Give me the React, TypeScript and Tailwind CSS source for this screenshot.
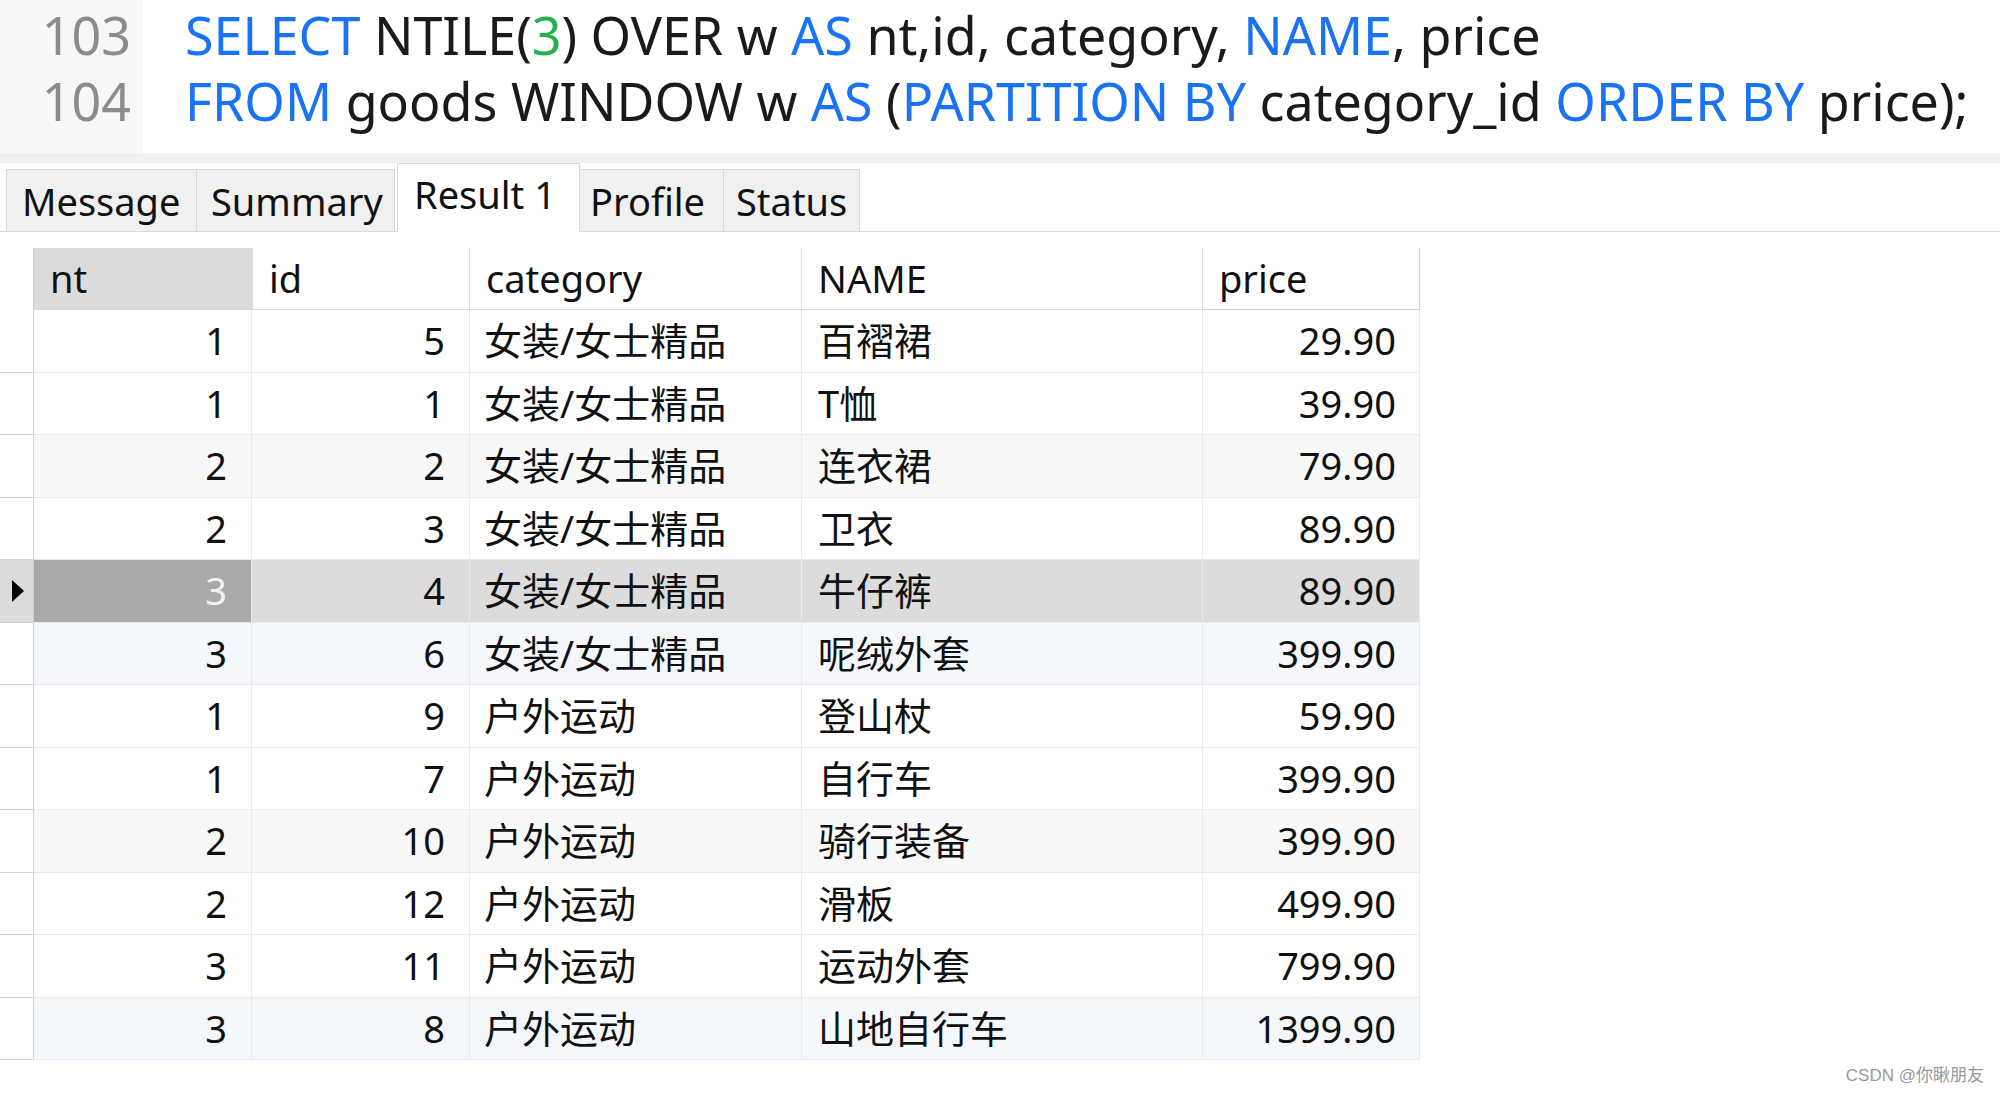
import React from 'react';

const rows: [string, string, string, string, string][] = [
  ['1', '5', '女装/女士精品', '百褶裙', '29.90'],
  ['1', '1', '女装/女士精品', 'T恤', '39.90'],
  ['2', '2', '女装/女士精品', '连衣裙', '79.90'],
  ['2', '3', '女装/女士精品', '卫衣', '89.90'],
  ['3', '4', '女装/女士精品', '牛仔裤', '89.90'],
  ['3', '6', '女装/女士精品', '呢绒外套', '399.90'],
  ['1', '9', '户外运动', '登山杖', '59.90'],
  ['1', '7', '户外运动', '自行车', '399.90'],
  ['2', '10', '户外运动', '骑行装备', '399.90'],
  ['2', '12', '户外运动', '滑板', '499.90'],
  ['3', '11', '户外运动', '运动外套', '799.90'],
  ['3', '8', '户外运动', '山地自行车', '1399.90'],
];

function rowBg(i: number): string {
  if (i === 4) return 'bg-[#dcdcdc]';
  if (i === 2 || i === 8) return 'bg-[#f8f8f8]';
  if (i === 5 || i === 11) return 'bg-[#f4f8fd]';
  return 'bg-white';
}

const K = ({ children }: { children: React.ReactNode }) => (
  <span className="text-[#1a73f5]">{children}</span>
);

export default function App() {
  return (
    <div className="relative w-[2000px] h-[1096px] bg-white overflow-hidden font-['Noto_Sans','Noto_Sans_CJK_SC',sans-serif] text-[#1c1c1c]">
      {/* Code editor */}
      <div className="flex h-[153px]">
        <div className="w-[143px] bg-[#f7f7f7] flex flex-col items-end pr-[12px] pt-[2px] text-[52px] leading-[66px] text-[#8c8c8c]">
          <div>103</div>
          <div>104</div>
        </div>
        <div className="flex-1 pl-[42px] pt-[2px] text-[52px] leading-[66px] whitespace-pre text-[#1a1a1a]">
          <div>
            <K>SELECT</K> NTILE(<span className="text-[#22b14c]">3</span>) OVER w <K>AS</K> nt,id, category, <K>NAME</K>, price
          </div>
          <div>
            <K>FROM</K> goods WINDOW w <K>AS</K> (<K>PARTITION BY</K> category_id <K>ORDER BY</K> price);
          </div>
        </div>
      </div>
      <div className="h-[10px] bg-[#f0f0f0]" />

      {/* Tabs */}
      <div className="flex items-end h-[69px] border-b border-[#d9d9d9] pl-[6px] text-[38px] text-[#111]">
        <div className="h-[62px] w-[191px] bg-[#f0f0f0] border border-b-0 border-[#d9d9d9] flex items-center pl-[15px] pt-[2px]">Message</div>
        <div className="h-[62px] w-[198px] bg-[#f0f0f0] border border-b-0 border-l-0 border-[#d9d9d9] flex items-center pl-[14px] pt-[2px]">Summary</div>
        <div className="h-[69px] w-[183px] ml-[2px] bg-white border border-b-0 border-[#d9d9d9] flex items-center pl-[16px] pb-[8px] -mb-px">Result 1</div>
        <div className="h-[62px] w-[144px] bg-[#f0f0f0] border border-b-0 border-l-0 border-[#d9d9d9] flex items-center pl-[10px] pt-[2px]">Profile</div>
        <div className="h-[62px] w-[136px] bg-[#f0f0f0] border border-b-0 border-l-0 border-[#d9d9d9] flex items-center pl-[12px] pt-[2px]">Status</div>
      </div>

      {/* Result grid */}
      <div className="mt-[16px] w-[1420px] grid grid-cols-[34px_218px_218px_332px_401px_217px] text-[38px] text-[#111]">
        {/* header */}
        <div className="h-[62px] border-r border-[#d0d0d0]" />
        <div className="h-[62px] bg-[#dcdcdc] border-b border-[#dcdcdc] flex items-center pl-[16px]">nt</div>
        <div className="h-[62px] border-b border-r border-[#dcdcdc] border-l border-l-[#d8d8d8] flex items-center pl-[16px]">id</div>
        <div className="h-[62px] border-b border-r border-[#dcdcdc] flex items-center pl-[16px]">category</div>
        <div className="h-[62px] border-b border-r border-[#dcdcdc] flex items-center pl-[16px]">NAME</div>
        <div className="h-[62px] border-b border-r border-[#d0d0d0] flex items-center pl-[16px]">price</div>

        {rows.map((r, i) => {
          const bg = rowBg(i);
          const sel = i === 4;
          return (
            <React.Fragment key={i}>
              <div className={`h-[62.5px] border-r border-b border-[#d2d2d2] flex items-center pl-[12px] ${sel ? 'bg-[#dcdcdc]' : 'bg-white'}`}>
                {sel && (
                  <svg width="12" height="22" viewBox="0 0 12 22">
                    <path d="M0 0 L12 11 L0 22 Z" fill="#000" />
                  </svg>
                )}
              </div>
              <div className={`h-[62.5px] border-r border-b border-[#ebebeb] flex items-center justify-end pr-[24px] ${sel ? 'bg-[#a9a9a9] text-[#f2f2f2]' : bg}`}>{r[0]}</div>
              <div className={`h-[62.5px] border-r border-b border-[#ebebeb] flex items-center justify-end pr-[24px] ${bg}`}>{r[1]}</div>
              <div className={`h-[62.5px] border-r border-b border-[#ebebeb] flex items-center pl-[14px] ${bg}`}>{r[2]}</div>
              <div className={`h-[62.5px] border-r border-b border-[#ebebeb] flex items-center pl-[16px] ${bg}`}>{r[3]}</div>
              <div className={`h-[62.5px] border-r border-b border-[#ebebeb] flex items-center justify-end pr-[23px] ${bg}`}>{r[4]}</div>
            </React.Fragment>
          );
        })}
      </div>

      {/* watermark */}
      <div className="absolute right-[16px] bottom-[8px] text-[17px] text-[#999] font-['Liberation_Sans','Noto_Sans_CJK_SC',sans-serif]">
        CSDN @你瞅朋友
      </div>
    </div>
  );
}
